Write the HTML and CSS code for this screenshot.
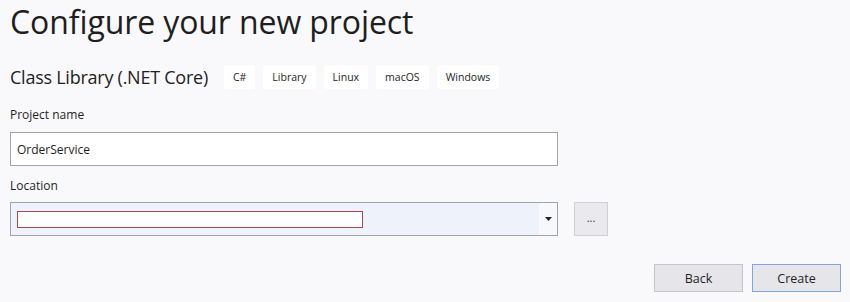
FILE: index.html
```html
<!DOCTYPE html>
<html lang="en">
<head>
    <meta charset="UTF-8">
    <title>Configure your new project</title>
    <link rel="stylesheet" href="styles.css">
</head>
<body>
    <div class="page">
        <h1>Configure your new project</h1>

        <div class="template-row">
            <span class="template-name">Class Library (.NET Core)</span>
            <span class="tag">C#</span>
            <span class="tag">Library</span>
            <span class="tag">Linux</span>
            <span class="tag">macOS</span>
            <span class="tag">Windows</span>
        </div>

        <label class="field-label" for="project-name">Project name</label>
        <input class="text-input" id="project-name" type="text" value="OrderService">

        <label class="field-label location-label">Location</label>
        <div class="location-row">
            <div class="combo">
                <div class="combo-value"></div>
                <div class="combo-arrow">
                    <svg width="7" height="4" viewBox="0 0 7 4"><path d="M0 0H7L3.5 4Z" fill="#222"/></svg>
                </div>
            </div>
            <button class="browse">...</button>
        </div>

        <div class="actions">
            <button class="btn">Back</button>
            <button class="btn btn-primary">Create</button>
        </div>
    </div>
</body>
</html>
```
FILE: styles.css
```css
body {
    margin: 0;
    padding: 0;
    background-color: #f9f9fb;
    color: #1e1e1e;
    font-family: "Open Sans", "Noto Sans", sans-serif;
}
.page {
    padding: 0 9px 0 10px;
}
h1 {
    margin: 0;
    font-size: 32px;
    font-weight: 400;
    line-height: normal;
    height: 44px;
    letter-spacing: -0.1px;
    white-space: nowrap;
}
.template-row {
    display: flex;
    align-items: center;
    height: 24px;
    margin-top: 21px;
}
.template-name {
    font-size: 18px;
    letter-spacing: -0.25px;
    margin-right: 16px;
    white-space: nowrap;
}
.tag {
    background-color: #ffffff;
    border-radius: 3px;
    height: 24px;
    line-height: 24px;
    padding: 0 9px;
    margin-right: 8px;
    font-size: 10.5px;
}
.field-label {
    display: block;
    margin-top: 18px;
    font-size: 12px;
    line-height: 16px;
    height: 16px;
    margin-bottom: 9px;
}
.location-label {
    margin-top: 12px;
    margin-bottom: 8px;
}
.text-input {
    display: block;
    box-sizing: border-box;
    width: 548px;
    height: 34px;
    margin: 0;
    border: 1px solid #a3a3a3;
    background-color: #ffffff;
    padding: 0 6px;
    font-family: inherit;
    font-size: 12px;
    color: #1e1e1e;
    outline: none;
}
.location-row {
    display: flex;
    gap: 16px;
    height: 34px;
}
.combo {
    box-sizing: border-box;
    width: 548px;
    height: 34px;
    border: 1px solid #a3a3a3;
    background-color: #eef3fb;
    display: flex;
    align-items: center;
    padding-left: 6px;
}
.combo-value {
    box-sizing: border-box;
    width: 346px;
    height: 17px;
    background-color: #ffffff;
    border: 1px solid #a8474f;
}
.combo-arrow {
    margin-left: auto;
    width: 18px;
    height: 32px;
    background-color: #f6f8fc;
    display: flex;
    align-items: center;
    justify-content: center;
}
.browse {
    box-sizing: border-box;
    width: 34px;
    height: 34px;
    border: 1px solid #cfcfd4;
    background-color: #e9e9ee;
    font-family: inherit;
    font-size: 11px;
    color: #333;
    padding: 0 0 4px;
}
.actions {
    display: flex;
    justify-content: flex-end;
    gap: 9px;
    margin-top: 28px;
}
.btn {
    box-sizing: border-box;
    width: 89px;
    height: 28px;
    border: 1px solid #c4c4c8;
    background-color: #e6e6ea;
    font-family: inherit;
    font-size: 12.5px;
    color: #1e1e1e;
    padding: 0;
}
.btn-primary {
    border-color: #7ea6d6;
}
```
